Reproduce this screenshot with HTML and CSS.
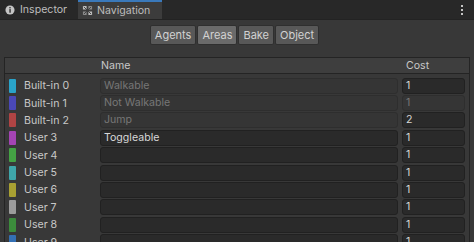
FILE: index.html
```html
<!DOCTYPE html>
<html lang="en">
<head>
    <meta charset="UTF-8">
    <title>Navigation</title>
    <link rel="stylesheet" href="styles.css">
</head>
<body>
    <div class="tabbar">
        <div class="tab">
            <svg class="ico" width="10" height="10" viewBox="0 0 11 11"><circle cx="5.5" cy="5.5" r="5" fill="#c4c4c4"/><rect x="4.8" y="4.5" width="1.5" height="4" fill="#282828"/><circle cx="5.5" cy="3" r="0.9" fill="#282828"/></svg>
            Inspector
        </div>
        <div class="tab active">
            <svg class="ico" width="11" height="11" viewBox="0 0 12 12"><path d="M1 1h4v4H1zM7 7h4v4H7z" fill="#bdbdbd"/><path d="M7 1h4v4H7zM1 7h4v4H1z" fill="#8a8a8a"/><path d="M2 10L10 2M2 2l8 8" stroke="#3c3c3c" stroke-width="1"/></svg>
            Navigation
        </div>
        <div class="menu"><span></span><span></span><span></span></div>
    </div>

    <div class="content">
        <div class="toolbar">
            <button class="tbtn">Agents</button>
            <button class="tbtn on">Areas</button>
            <button class="tbtn">Bake</button>
            <button class="tbtn">Object</button>
        </div>

        <div class="table">
            <div class="head">
                <span class="h-name">Name</span>
                <span class="h-cost">Cost</span>
            </div>
            <div class="row"><i class="sw" style="background:#2aa3c9"></i><span class="label">Built-in 0</span><span class="field off">Walkable</span><span class="cost">1</span></div>
            <div class="row"><i class="sw" style="background:#4a48b8"></i><span class="label">Built-in 1</span><span class="field off">Not Walkable</span><span class="cost off">1</span></div>
            <div class="row"><i class="sw" style="background:#b04444"></i><span class="label">Built-in 2</span><span class="field off">Jump</span><span class="cost">2</span></div>
            <div class="row"><i class="sw" style="background:#a444b4"></i><span class="label">User 3</span><span class="field">Toggleable</span><span class="cost">1</span></div>
            <div class="row"><i class="sw" style="background:#44a244"></i><span class="label">User 4</span><span class="field"></span><span class="cost">1</span></div>
            <div class="row"><i class="sw" style="background:#3fa6aa"></i><span class="label">User 5</span><span class="field"></span><span class="cost">1</span></div>
            <div class="row"><i class="sw" style="background:#a8a032"></i><span class="label">User 6</span><span class="field"></span><span class="cost">1</span></div>
            <div class="row"><i class="sw" style="background:#9c9c9c"></i><span class="label">User 7</span><span class="field"></span><span class="cost">1</span></div>
            <div class="row"><i class="sw" style="background:#3c8c3c"></i><span class="label">User 8</span><span class="field"></span><span class="cost">1</span></div>
            <div class="row"><i class="sw" style="background:#3470b4"></i><span class="label">User 9</span><span class="field"></span><span class="cost">1</span></div>
        </div>
    </div>
</body>
</html>
```

FILE: styles.css
```css
body {
    margin: 0;
    width: 474px;
    height: 242px;
    overflow: hidden;
    background: #383838;
    font-family: Inter, "Noto Sans", sans-serif;
    font-size: 10.6px;
    color: #c8c8c8;
}
.tabbar {
    display: flex;
    height: 19px;
    background: #282828;
    border-bottom: 1px solid #232323;
}
.tab {
    display: flex;
    align-items: center;
    gap: 5px;
    width: 72px;
    padding-left: 5px;
    color: #bdbdbd;
}
.ico {
    flex: none;
}
.tab.active {
    background: #3c3c3c;
    border-top: 2px solid #3a79bb;
    box-sizing: border-box;
    width: 84px;
    margin-left: 1px;
    padding-left: 4px;
    gap: 4px;
}
.menu {
    margin-left: auto;
    margin-right: 11px;
    display: flex;
    flex-direction: column;
    justify-content: center;
    gap: 2px;
}
.menu span {
    width: 2px;
    height: 2px;
    background: #c4c4c4;
}
.content {
    padding: 5px 4px 0 4px;
}
.toolbar {
    display: flex;
    justify-content: center;
    gap: 1px;
    margin-right: 5px;
}
.tbtn {
    font: inherit;
    font-size: 11px;
    color: #d2d2d2;
    background: #585858;
    border: 1px solid #2f2f2f;
    border-radius: 2px;
    height: 20px;
    padding: 0 4px;
}
.tbtn.on {
    background: #6a6a6a;
}
.table {
    margin-top: 12px;
    border: 1px solid #242424;
    border-bottom: none;
}
.head {
    display: flex;
    height: 15px;
    align-items: center;
    background: #3e3e3e;
    border-bottom: 1px solid #242424;
    margin-bottom: 3px;
}
.h-name {
    margin-left: 96px;
}
.h-cost {
    margin-left: auto;
    width: 63px;
}
.row {
    display: flex;
    align-items: center;
    height: 17.375px;
    padding-left: 4px;
}
.sw {
    width: 7px;
    height: 14px;
    border-radius: 1px;
    margin-right: 8px;
}
.label {
    width: 76px;
}
.field, .cost {
    height: 14px;
    line-height: 14px;
    background: #2a2a2a;
    border: 1px solid #212121;
    border-radius: 3px;
    padding: 0 2px 0 3px;
    color: #d8d8d8;
}
.field {
    width: 291px;
}
.cost {
    width: 56px;
    margin-left: 4px;
}
.off {
    background: #353535;
    border-color: #2e2e2e;
    color: #777;
}
```
